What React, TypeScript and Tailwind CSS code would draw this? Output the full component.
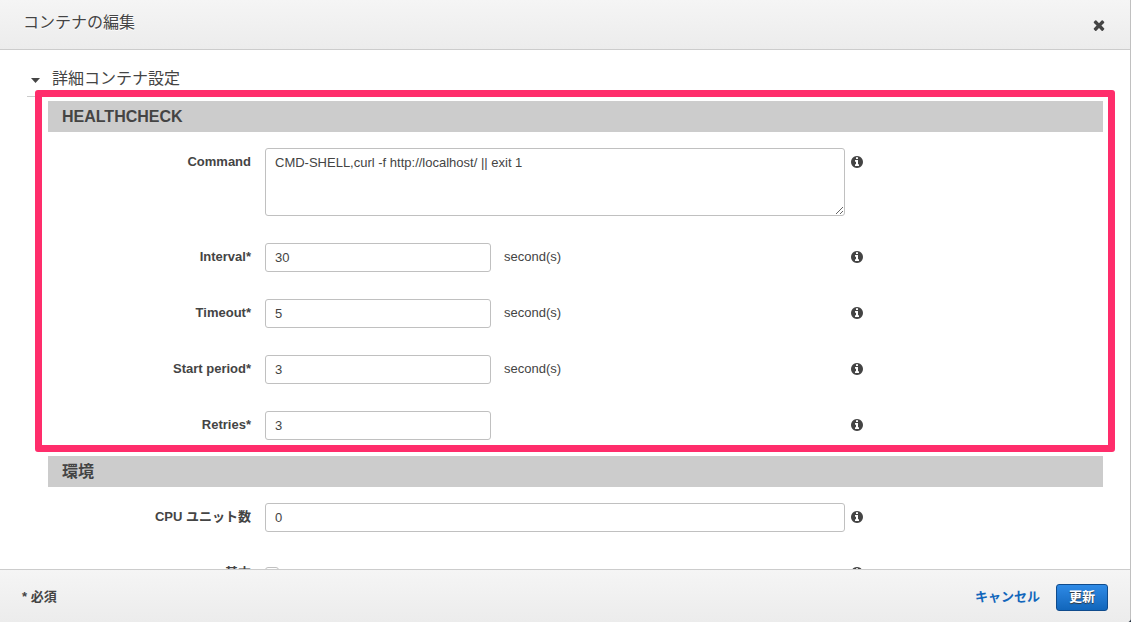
import type { ReactNode } from "react";

const InfoIcon = () => {
  return (
    <svg viewBox="0 0 1792 1792" className="size-3.5 fill-current" aria-hidden="true">
      <path d="M1152 1376v-160q0-14-9-23t-23-9h-96v-512q0-14-9-23t-23-9h-320q-14 0-23 9t-9 23v160q0 14 9 23t23 9h96v320h-96q-14 0-23 9t-9 23v160q0 14 9 23t23 9h448q14 0 23-9t9-23zm-128-896v-160q0-14-9-23t-23-9h-192q-14 0-23 9t-9 23v160q0 14 9 23t23 9h192q14 0 23-9t9-23zm640 416q0 209-103 385.5t-279.5 279.5-385.5 103-385.5-103-279.5-279.5-103-385.5 103-385.5 279.5-279.5 385.5-103 385.5 103 279.5 279.5 103 385.5z" />
    </svg>
  );
};

const CloseIcon = () => {
  return (
    <svg viewBox="0 0 1792 1792" className="size-4 fill-current" aria-hidden="true">
      <path d="M1490 1322q0 40-28 68l-136 136q-28 28-68 28t-68-28l-294-294-294 294q-28 28-68 28t-68-28l-136-136q-28-28-28-68t28-68l294-294-294-294q-28-28-28-68t28-68l136-136q28-28 68-28t68 28l294 294 294-294q28-28 68-28t68 28l136 136q28 28 28 68t-28 68l-294 294 294 294q28 28 28 68z" />
    </svg>
  );
};

type RowProps = {
  id: string;
  label: string;
  children: ReactNode;
};

const Row = ({ id, label, children }: RowProps) => {
  return (
    <div className="grid grid-cols-[203px_minmax(0,594px)_auto] justify-start">
      <label htmlFor={id} className="flex h-7 items-center justify-end font-bold">
        {label}
      </label>
      <div className="flex min-h-[29px] items-center pl-3.5">{children}</div>
      <button type="button" aria-label={label} className="flex h-7 items-center pl-[5px]">
        <InfoIcon />
      </button>
    </div>
  );
};

const SectionTitle = ({ children }: { children: ReactNode }) => {
  return <h3 className="h-[31px] bg-[#ccc] px-3.5 text-base leading-8 font-bold">{children}</h3>;
};

const fields = [
  { id: "interval", label: "Interval*", value: "30", unit: "second(s)" },
  { id: "timeout", label: "Timeout*", value: "5", unit: "second(s)" },
  { id: "start-period", label: "Start period*", value: "3", unit: "second(s)" },
  { id: "retries", label: "Retries*", value: "3", unit: "" },
];

const App = () => {
  return (
    <div className="h-screen bg-[#232f3e] font-['Liberation_Sans','Noto_Sans_CJK_JP',sans-serif] text-[13px] text-[#444]">
      <div className="flex h-full flex-col overflow-hidden rounded-br-[4px] border-r border-[#c0c0c0] bg-white">
        <header className="flex h-[50px] shrink-0 items-center justify-between border-b border-[#ccc] bg-linear-to-b from-[#f5f5f5] to-[#ececec] pr-[23px] pb-1 pl-[23px]">
          <h1 className="text-base [text-shadow:0_1px_0_#fff]">コンテナの編集</h1>
          <button type="button" aria-label="閉じる" className="pt-1">
            <CloseIcon />
          </button>
        </header>

        <main className="min-h-0 flex-1 overflow-y-auto px-[27px] [scrollbar-width:none]">
          <h2 className="border-b border-[#ccc] pt-3.5 pb-0.5 text-base leading-[30px]">
            <button type="button" aria-expanded="true" className="flex items-center gap-3 pl-1">
              <svg viewBox="0 0 9 5" className="mt-0.5 h-[5px] w-[9px] fill-current" aria-hidden="true">
                <path d="M0 0h9L4.500 5z" />
              </svg>
              詳細コンテナ設定
            </button>
          </h2>

          {/* healthcheck */}
          <section className="relative mt-1 ml-[21px]">
            <SectionTitle>HEALTHCHECK</SectionTitle>
            <div className="flex flex-col gap-[27px] pt-4">
              <Row id="command" label="Command">
                <textarea
                  id="command"
                  defaultValue="CMD-SHELL,curl -f http://localhost/ || exit 1"
                  className="h-[68px] w-full rounded-[3px] border border-[#c0c0c0] bg-white px-[9px] py-1 leading-5"
                />
              </Row>
              {fields.map((field) => (
                <Row key={field.id} id={field.id} label={field.label}>
                  <input
                    id={field.id}
                    type="text"
                    defaultValue={field.value}
                    className="h-[29px] w-[226px] rounded-[3px] border border-[#c0c0c0] bg-white px-[9px]"
                  />
                  <span className="pb-0.5 pl-[13px]">{field.unit}</span>
                </Row>
              ))}
            </div>
            <div className="pointer-events-none absolute -top-[11px] -right-3 -bottom-3 -left-[13px] rounded-[3px] border-[7px] border-[#ff2d6b]" />
          </section>

          {/* environment */}
          <section className="mt-4 ml-[21px]">
            <SectionTitle>環境</SectionTitle>
            <div className="flex flex-col gap-[27px] pt-4">
              <Row id="cpu" label="CPU ユニット数">
                <input
                  id="cpu"
                  type="text"
                  defaultValue="0"
                  className="h-[29px] w-full rounded-[3px] border border-[#c0c0c0] bg-white px-[9px]"
                />
              </Row>
              <Row id="essential" label="基本">
                <input
                  id="essential"
                  type="checkbox"
                  className="size-3.5 appearance-none rounded-[3px] border border-[#c0c0c0] bg-white"
                />
              </Row>
            </div>
          </section>
        </main>

        <footer className="flex h-[53px] shrink-0 items-center justify-between border-t border-[#ccc] bg-linear-to-b from-[#f5f5f5] to-[#ececec] px-[22px] pt-0.5 font-bold">
          <p>* 必須</p>
          <div className="flex items-center gap-4">
            <a href="#" className="text-[#1166bb]">
              キャンセル
            </a>
            <button
              type="submit"
              className="h-[27px] rounded-[3px] border border-[#0f4b8c] bg-linear-to-b from-[#2e8ae6] to-[#1166bb] px-3 text-white [text-shadow:0_1px_1px_#333]"
            >
              更新
            </button>
          </div>
        </footer>
      </div>
    </div>
  );
};

export default App;
